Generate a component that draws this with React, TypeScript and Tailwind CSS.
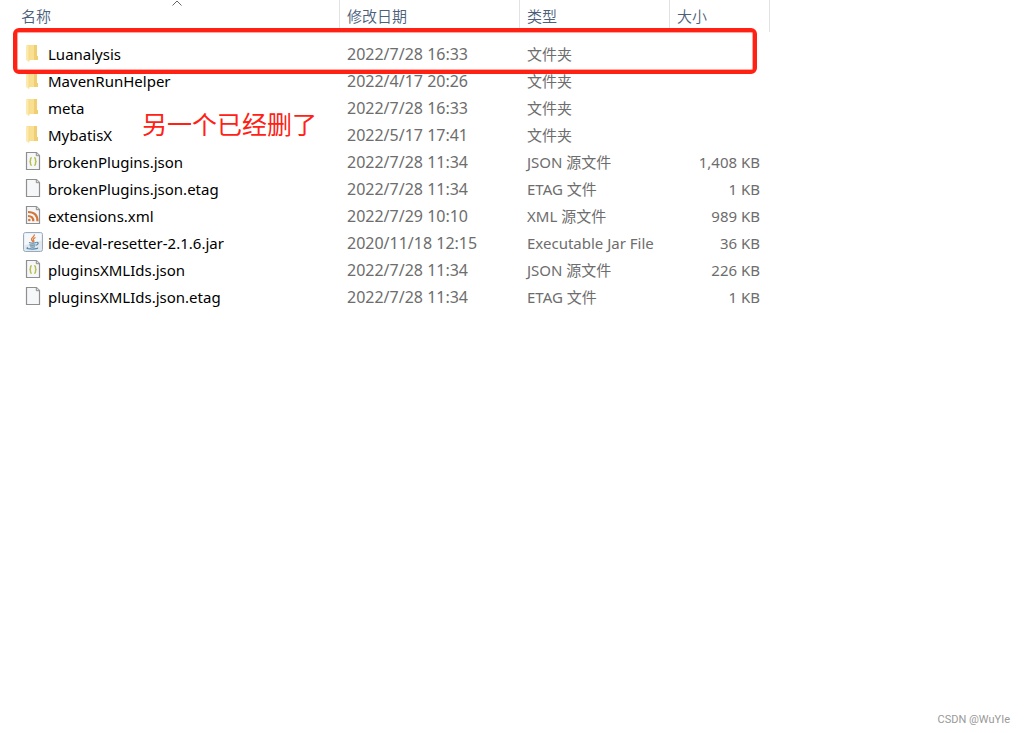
import React from "react";

type Kind = "folder" | "json" | "blank" | "xml" | "jar";

interface Entry {
  name: string;
  kind: Kind;
  modified: string;
  type: string;
  size?: string;
}

const entries: Entry[] = [
  { name: "Luanalysis", kind: "folder", modified: "2022/7/28 16:33", type: "文件夹" },
  { name: "MavenRunHelper", kind: "folder", modified: "2022/4/17 20:26", type: "文件夹" },
  { name: "meta", kind: "folder", modified: "2022/7/28 16:33", type: "文件夹" },
  { name: "MybatisX", kind: "folder", modified: "2022/5/17 17:41", type: "文件夹" },
  { name: "brokenPlugins.json", kind: "json", modified: "2022/7/28 11:34", type: "JSON 源文件", size: "1,408 KB" },
  { name: "brokenPlugins.json.etag", kind: "blank", modified: "2022/7/28 11:34", type: "ETAG 文件", size: "1 KB" },
  { name: "extensions.xml", kind: "xml", modified: "2022/7/29 10:10", type: "XML 源文件", size: "989 KB" },
  { name: "ide-eval-resetter-2.1.6.jar", kind: "jar", modified: "2020/11/18 12:15", type: "Executable Jar File", size: "36 KB" },
  { name: "pluginsXMLIds.json", kind: "json", modified: "2022/7/28 11:34", type: "JSON 源文件", size: "226 KB" },
  { name: "pluginsXMLIds.json.etag", kind: "blank", modified: "2022/7/28 11:34", type: "ETAG 文件", size: "1 KB" },
];

function FolderShape() {
  return (
    <>
      <path d="M4 2h10v11h1v4H5z" fill="#f8df92" />
      <path d="M11 2h3v11h1v4h-4z" fill="#f0cf73" />
      <path d="M3 2l3 1.500v15.500l-3-2z" fill="#fdeab0" />
      <path d="M6 3.500v15" stroke="#f5d680" strokeWidth="0.700" />
    </>
  );
}

function PageShape() {
  return (
    <>
      <path d="M3.500 1.500h10l3 3v14h-13z" fill="#f5f7f8" stroke="#8f8f8f" strokeWidth="1.200" />
      <path d="M13.300 1.500v3.200h3.200" fill="#dfe3e5" stroke="#8f8f8f" strokeWidth="1" />
    </>
  );
}

function FileIcon({ kind }: { kind: Kind }) {
  return (
    <svg viewBox="0 0 20 21" className="h-[21px] w-5 shrink-0" aria-hidden="true">
      {kind === "folder" && <FolderShape />}
      {(kind === "json" || kind === "blank" || kind === "xml") && <PageShape />}
      {kind === "json" && (
        <path
          d="M8.800 6.800q-1.300 0-1.300 1.200v1.400q0 1.100-1.200 1.100 1.200 0 1.200 1.100v1.400q0 1.200 1.300 1.200M11.200 6.800q1.300 0 1.300 1.200v1.400q0 1.100 1.200 1.100-1.200 0-1.200 1.100v1.400q0 1.200-1.300 1.200"
          fill="none"
          stroke="#b9bf4e"
          strokeWidth="1.400"
        />
      )}
      {kind === "xml" && (
        <g fill="none" stroke="#d4753a" strokeWidth="2.200">
          <path d="M5 7q9.500 0 9.500 9.300" />
          <path d="M5 11q5.300 0 5.300 5.300" />
          <circle cx="6.300" cy="15" r="1.300" fill="#d4753a" stroke="none" />
        </g>
      )}
      {kind === "jar" && (
        <>
          <rect x="0.500" y="0.500" width="19" height="19" rx="2" fill="#dfe8ef" stroke="#9aaaba" />
          <path d="M1.500 1.500h17v7q-8 1-17 5z" fill="#f4f8fb" />
          <path d="M11 2.500c1.500 2-3.500 3.200-2.500 5.200.3.800 1.200 1.300 1 2.300M12.500 5.500c-2.200 1-2.800 2-1.800 3 .5.700.2 1.200-.4 1.700" fill="none" stroke="#df7b3f" strokeWidth="1.300" />
          <path d="M6 10.500q4 1.300 7 0M6.500 12.700q3 1 6 0M7.200 14.700q2.500.8 4.800 0M13.300 10.500q2.500-.3 1.700 1.200-.5 1-2 1.500M5 15.500q-2 .8 0 1.200 4.500.8 8.500 0 1.500-.3 1-1" fill="none" stroke="#5b86a5" strokeWidth="1.200" />
        </>
      )}
    </svg>
  );
}

const heading = "h-8 border-r border-[#e2e2e2] p-0 pl-[7px] text-left font-[350]";

export default function App() {
  return (
    <div className="relative flex min-h-screen flex-col justify-between bg-white font-['Noto_Sans','Noto_Sans_CJK_SC',sans-serif] text-[15px] leading-5 text-[#6d6d6d]">
      <main className="relative w-full max-w-[770px]">
        <table className="w-full table-fixed border-separate border-spacing-0">
          <colgroup>
            <col />
            <col className="w-[180px]" />
            <col className="w-[150px]" />
            <col className="w-[100px]" />
          </colgroup>
          <thead className="font-['Noto_Sans_CJK_SC',sans-serif] text-[#4c607a]">
            <tr>
              <th className="relative h-8 border-r border-[#e2e2e2] p-0 pl-[21px] text-left font-[350]" aria-sort="ascending">
                <button type="button" className="block">名称</button>
                <svg viewBox="0 0 10 6" className="absolute top-0 left-[172px] h-1.5 w-2.5" aria-hidden="true">
                  <path d="M0.500 5.500l4.500-4.500 4.500 4.500" fill="none" stroke="#666" />
                </svg>
              </th>
              <th className={heading}><button type="button" className="block">修改日期</button></th>
              <th className={heading}><button type="button" className="block">类型</button></th>
              <th className={heading}><button type="button" className="block">大小</button></th>
            </tr>
          </thead>
          <tbody>
            <tr aria-hidden="true"><td colSpan={4} className="h-2 p-0" /></tr>
            {entries.map((e) => (
              <tr key={e.name} className="whitespace-nowrap">
                <td className="h-[27px] p-0 pl-[23px] text-black">
                  <div className="flex items-center gap-[5px]">
                    <FileIcon kind={e.kind} />
                    <span>{e.name}</span>
                  </div>
                </td>
                <td className="p-0 pl-[7px] text-base leading-5">{e.modified}</td>
                <td className="p-0 pl-[7px]">{e.type}</td>
                <td className="p-0 pr-2.5 text-right">{e.size}</td>
              </tr>
            ))}
          </tbody>
        </table>
        <div className="pointer-events-none absolute top-7 right-[13px] left-[13px] h-[46px] rounded-md border-4 border-[#ff2114] ring-1 ring-[#ff2114]/40 ring-inset" />
        <p className="absolute top-[106px] left-[142px] text-[25px] leading-9 whitespace-nowrap text-[#ff2114]">另一个已经删了</p>
      </main>
      <footer className="flex justify-end px-[15px] pb-[5px] font-['Roboto',sans-serif] text-[11px] leading-4 text-[#999999]">
        CSDN @WuYIe
      </footer>
    </div>
  );
}
